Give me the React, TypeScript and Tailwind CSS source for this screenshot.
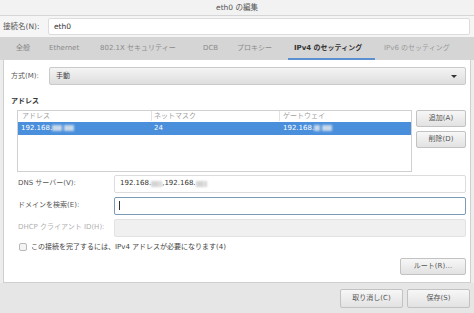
import React from 'react';

const font = { fontFamily: '"DejaVu Sans", "Noto Sans CJK JP", sans-serif' };

const tabs = [
  { label: '全般', w: 'w-[33px]' },
  { label: 'Ethernet', w: 'w-[51px]' },
  { label: '802.1X セキュリティー', w: 'w-[103px]' },
  { label: 'DCB', w: 'w-[34px]' },
  { label: 'プロキシー', w: 'w-[51px]' },
  { label: 'IPv4 のセッティング', w: 'w-[87px]' },
  { label: 'IPv6 のセッティング', w: 'w-[86px]' },
];

function Blot({ w, light }: { w: number; light?: boolean }) {
  return (
    <span
      className={`inline-block h-[6px] align-middle blur-[1px] ${light ? 'bg-[#c9d9ec]' : 'bg-[#d4d4d4]'}`}
      style={{ width: w }}
    />
  );
}

function Btn({ children, className = '' }: { children: React.ReactNode; className?: string }) {
  return (
    <div
      className={`flex items-center justify-center rounded-[2px] border border-[#c2c2c2] bg-gradient-to-b from-[#f7f7f7] to-[#e2e2e2] text-[#555] ${className}`}
    >
      {children}
    </div>
  );
}

export default function App() {
  return (
    <div className="flex h-[313px] w-[474px] flex-col bg-[#ededed] text-[7px] text-[#444]" style={font}>
      <div className="flex h-[16px] items-center justify-center border-b border-[#d6d6d6] bg-[#f2f2f2] text-[7.5px] text-[#555]">
        eth0 の編集
      </div>

      <div className="flex h-[21px] items-center bg-[#f5f5f5] pl-[3px] pr-[4px]">
        <span className="w-[45px] text-[7.5px] text-[#555]">接続名(N):</span>
        <div className="flex h-[17px] flex-1 items-center rounded-[2px] border border-[#dcdcdc] bg-white pl-[5px] text-[7.5px] text-[#333]">
          eth0
        </div>
      </div>

      <div className="flex h-[23px] items-stretch bg-[#d5d5d5] pl-[16px]">
        {tabs.map((t, i) => {
          const active = i === 5;
          return (
            <div
              key={t.label}
              className={`flex shrink-0 items-center whitespace-nowrap ${t.w} ${
                active
                  ? 'border-b-2 border-[#5a8fd0] pl-[6px] pt-[2px] font-bold text-[#333]'
                  : i === 6
                    ? 'ml-[9px] text-[#9a9a9a]'
                    : 'text-[#8a8a8a]'
              }`}
            >
              {t.label}
            </div>
          );
        })}
      </div>

      <div className="mx-[3px] flex flex-1 flex-col border border-t-0 border-[#cfcfcf] bg-white pl-[7px] pr-[4px]">
        <div className="mt-[7px] flex h-[18px] items-center">
          <span className="w-[38px] text-[#555]">方式(M):</span>
          <div className="flex h-full flex-1 items-center justify-between rounded-[2px] border border-[#cacaca] bg-gradient-to-b from-[#f4f4f4] to-[#dedede] pl-[6px] pr-[8px] text-[#444]">
            <span>手動</span>
            <span className="h-0 w-0 border-x-[3px] border-t-[3px] border-x-transparent border-t-[#333]" />
          </div>
        </div>

        <div className="mt-[11px] font-bold text-[#333]">アドレス</div>

        <div className="mt-[3px] flex gap-[4px] pl-[6px]">
          <div className="flex h-[62px] w-[395px] flex-col border border-[#d0d0d0] bg-white">
            <div className="grid h-[11px] grid-cols-[134px_128px_1fr] items-center text-[#a0a0a0]">
              <span className="border-r border-[#e2e2e2] pl-[4px]">アドレス</span>
              <span className="border-r border-[#e2e2e2] pl-[2px]">ネットマスク</span>
              <span className="pl-[3px]">ゲートウェイ</span>
            </div>
            <div className="grid h-[13px] grid-cols-[134px_128px_1fr] items-center bg-[#4a8fdb] text-white">
              <span className="pl-[3px]">
                192.168.<Blot w={10} light /> <Blot w={10} light />
              </span>
              <span className="pl-[2px]">24</span>
              <span className="pl-[3px]">
                192.168.<Blot w={6} light /> <Blot w={10} light />
              </span>
            </div>
          </div>
          <div className="flex flex-col gap-[4px]">
            <Btn className="h-[17px] w-[50px]">追加(A)</Btn>
            <Btn className="h-[17px] w-[50px]">削除(D)</Btn>
          </div>
        </div>

        <div className="mt-[3px] flex flex-col gap-[4px] pl-[7px]">
          <div className="flex h-[18px] items-center">
            <span className="w-[96px] text-[#555]">DNS サーバー(V):</span>
            <div className="flex h-full flex-1 items-center rounded-[2px] border border-[#dcdcdc] bg-white pl-[5px] text-[#333]">
              192.168.<Blot w={8} /> <Blot w={3} />,192.168.<Blot w={8} /> <Blot w={3} />
            </div>
          </div>
          <div className="flex h-[18px] items-center">
            <span className="w-[96px] text-[#555]">ドメインを検索(E):</span>
            <div className="flex h-full flex-1 items-center rounded-[2px] border border-[#7b9ab5] bg-white pl-[4px]">
              <span className="h-[9px] w-px bg-[#333]" />
            </div>
          </div>
          <div className="flex h-[18px] items-center">
            <span className="w-[96px] text-[#b0b0b0]">DHCP クライアント ID(H):</span>
            <div className="h-full flex-1 rounded-[2px] border border-[#e2e2e2] bg-[#f0f0f0]" />
          </div>
        </div>

        <div className="mt-[5px] flex items-center gap-[4px] pl-[8px] text-[#444]">
          <span className="h-[8px] w-[8px] rounded-[2px] border border-[#b8b8b8] bg-[#f4f4f4]" />
          <span>この接続を完了するには、IPv4 アドレスが必要になります(4)</span>
        </div>

        <div className="mt-[6px] flex justify-end">
          <Btn className="h-[17px] w-[66px]">ルート(R)…</Btn>
        </div>
      </div>

      <div className="flex h-[30px] items-center justify-end gap-[4px] bg-[#e6e6e6] pr-[4px]">
        <Btn className="h-[19px] w-[63px]">取り消し(C)</Btn>
        <Btn className="h-[19px] w-[63px]">保存(S)</Btn>
      </div>
    </div>
  );
}
